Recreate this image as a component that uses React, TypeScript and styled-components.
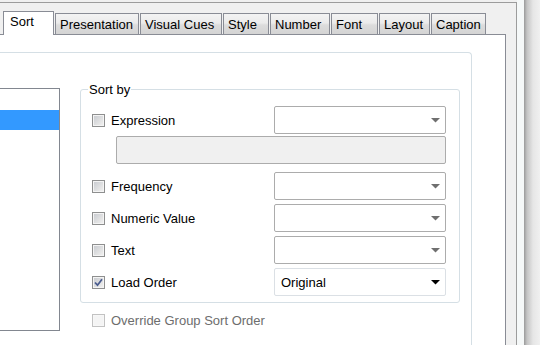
import React from 'react'
import styled, { createGlobalStyle } from 'styled-components'

const GlobalStyle = createGlobalStyle`
  html, body { margin: 0; padding: 0; }
  body {
    font-family: "Liberation Sans", Arial, sans-serif;
    font-size: 13px;
    color: #000;
    background: #f0f0f0;
  }
`

const Screen = styled.div`
  width: 540px;
  height: 345px;
  overflow: hidden;
  display: flex;
  background: #f0f0f0;
`

const Frame = styled.div`
  width: 517px;
  height: 360px;
  flex-shrink: 0;
  box-sizing: border-box;
  margin-top: 2px;
  border-top: 1px solid #9c9c9c;
  border-right: 1px solid #9c9c9c;
  display: flex;
  flex-direction: column;
`

const WindowEdge = styled.div`
  width: 23px;
  flex-shrink: 0;
  background: linear-gradient(
    to right,
    #f5f8f8 0,
    #f5f8f8 7px,
    #9a9a9a 7px,
    #c4c4c4 10px,
    #e6e6e6 16px,
    #f0f0f0 23px
  );
`

const TabStrip = styled.div`
  height: 31px;
  flex-shrink: 0;
  display: flex;
  align-items: flex-end;
  gap: 1px;
  padding-left: 3px;
`

const Tab = styled.div<{ $w: number; $active?: boolean }>`
  width: ${p => p.$w}px;
  box-sizing: border-box;
  flex-shrink: 0;
  border: 1px solid #898c95;
  border-bottom: none;
  white-space: nowrap;
  ${p => p.$active ? `
    height: 24px;
    margin-bottom: -1px;
    position: relative;
    z-index: 1;
    background: #fff;
    padding-left: 6px;
    line-height: 20px;
  ` : `
    height: 21px;
    background: linear-gradient(#f3f3f3, #ebebeb 45%, #dcdcdc 55%, #d4d4d4);
    padding-left: 4px;
    padding-top: 1px;
    line-height: 19px;
  `}
`

const Panel = styled.div`
  flex: 1;
  min-height: 0;
  overflow: hidden;
  margin-right: 10px;
  background: #fff;
  border-top: 1px solid #898c95;
  border-right: 1px solid #898c95;
`

const OuterGroup = styled.div`
  margin-top: 17px;
  width: 472px;
  height: 400px;
  box-sizing: border-box;
  border-top: 1px solid #d5dfe5;
  border-right: 1px solid #d5dfe5;
  border-top-right-radius: 4px;
  display: flex;
  align-items: flex-start;
`

const ListBox = styled.div`
  margin-top: 35px;
  width: 60px;
  height: 243px;
  box-sizing: border-box;
  border: 1px solid #828790;
  border-left: none;
  padding-top: 21px;
  background: #fff;
`

const ListRow = styled.div<{ $selected?: boolean }>`
  height: 20px;
  background: ${p => (p.$selected ? '#3399ff' : 'transparent')};
`

const SortColumn = styled.div`
  margin-left: 20px;
  margin-top: 29px;
  width: 380px;
  display: flex;
  flex-direction: column;
`

const GroupBox = styled.fieldset`
  margin: 0;
  min-width: 0;
  padding: 9px 13px 6px 11px;
  border: 1px solid #d5dfe5;
  border-radius: 3px;
  display: flex;
  flex-direction: column;
`

const Legend = styled.legend`
  margin-left: -4px;
  padding: 0 1px;
  line-height: 15px;
`

const Row = styled.div<{ $gap?: number }>`
  height: 28px;
  margin-top: ${p => p.$gap ?? 4}px;
  display: flex;
  align-items: center;
  justify-content: space-between;
`

const CheckLabel = styled.label<{ $disabled?: boolean }>`
  display: flex;
  align-items: center;
  gap: 6px;
  color: ${p => (p.$disabled ? '#6d6d6d' : '#000')};
`

const Box = styled.span<{ $disabled?: boolean }>`
  width: 13px;
  height: 13px;
  box-sizing: border-box;
  display: inline-flex;
  align-items: center;
  justify-content: center;
  border: 1px solid ${p => (p.$disabled ? '#c2c2c2' : '#8e8f8f')};
  box-shadow: inset 0 0 0 1px ${p => (p.$disabled ? '#f7f7f7' : '#f4f4f4')};
  background: ${p =>
    p.$disabled ? '#f4f4f4' : 'linear-gradient(135deg, #c6c9ce, #e8e8e8 75%, #f4f4f4)'};
`

const Combo = styled.div<{ $active?: boolean }>`
  width: 172px;
  height: 28px;
  box-sizing: border-box;
  border: 1px solid ${p => (p.$active ? '#dbe0e5' : '#acacac')};
  border-radius: 2px;
  background: #fff;
  display: flex;
  align-items: center;
  justify-content: space-between;
  padding: 0 5px 0 6px;
`

const ExprInput = styled.div`
  margin-top: 2px;
  margin-left: 24px;
  width: 330px;
  height: 28px;
  box-sizing: border-box;
  border: 1px solid #acacac;
  border-radius: 2px;
  background: #f0f0f0;
`

const OverrideRow = styled.div`
  height: 28px;
  margin-top: 3px;
  padding-left: 12px;
  display: flex;
  align-items: center;
`

const Checkbox: React.FC<{ checked?: boolean; disabled?: boolean; label: string }> = ({ checked, disabled, label }) => (
  <CheckLabel $disabled={disabled}>
    <Box $disabled={disabled}>
      {checked && (
        <svg width="9" height="9" viewBox="0 0 9 9">
          <path d="M1 4.5 L3.5 7.2 L8 1.3" fill="none" stroke="#4a5c8f" strokeWidth="1.8" />
        </svg>
      )}
    </Box>
    {label}
  </CheckLabel>
)

const Arrow: React.FC<{ color: string }> = ({ color }) => (
  <svg width="9" height="5" viewBox="0 0 9 5">
    <polygon points="0,0 9,0 4.5,4.5" fill={color} />
  </svg>
)

const tabs = [
  { label: 'Sort', w: 51 },
  { label: 'Presentation', w: 84 },
  { label: 'Visual Cues', w: 82 },
  { label: 'Style', w: 46 },
  { label: 'Number', w: 60 },
  { label: 'Font', w: 47 },
  { label: 'Layout', w: 51 },
  { label: 'Caption', w: 55 },
]

const sortRows = ['Frequency', 'Numeric Value', 'Text']

export default function App() {
  return (
    <Screen>
      <GlobalStyle />
      <Frame>
        <TabStrip>
          {tabs.map((t, i) => (
            <Tab key={t.label} $w={t.w} $active={i === 0}>{t.label}</Tab>
          ))}
        </TabStrip>
        <Panel>
          <OuterGroup>
            <ListBox>
              <ListRow $selected />
            </ListBox>
            <SortColumn>
              <GroupBox>
                <Legend>Sort by</Legend>
                <Row $gap={0}>
                  <Checkbox label="Expression" />
                  <Combo><span /><Arrow color="#6f6f6f" /></Combo>
                </Row>
                <ExprInput />
                {sortRows.map((r, i) => (
                  <Row key={r} $gap={i === 0 ? 8 : 4}>
                    <Checkbox label={r} />
                    <Combo><span /><Arrow color="#6f6f6f" /></Combo>
                  </Row>
                ))}
                <Row>
                  <Checkbox label="Load Order" checked />
                  <Combo $active><span>Original</span><Arrow color="#000" /></Combo>
                </Row>
              </GroupBox>
              <OverrideRow>
                <Checkbox label="Override Group Sort Order" disabled />
              </OverrideRow>
            </SortColumn>
          </OuterGroup>
        </Panel>
      </Frame>
      <WindowEdge />
    </Screen>
  )
}
